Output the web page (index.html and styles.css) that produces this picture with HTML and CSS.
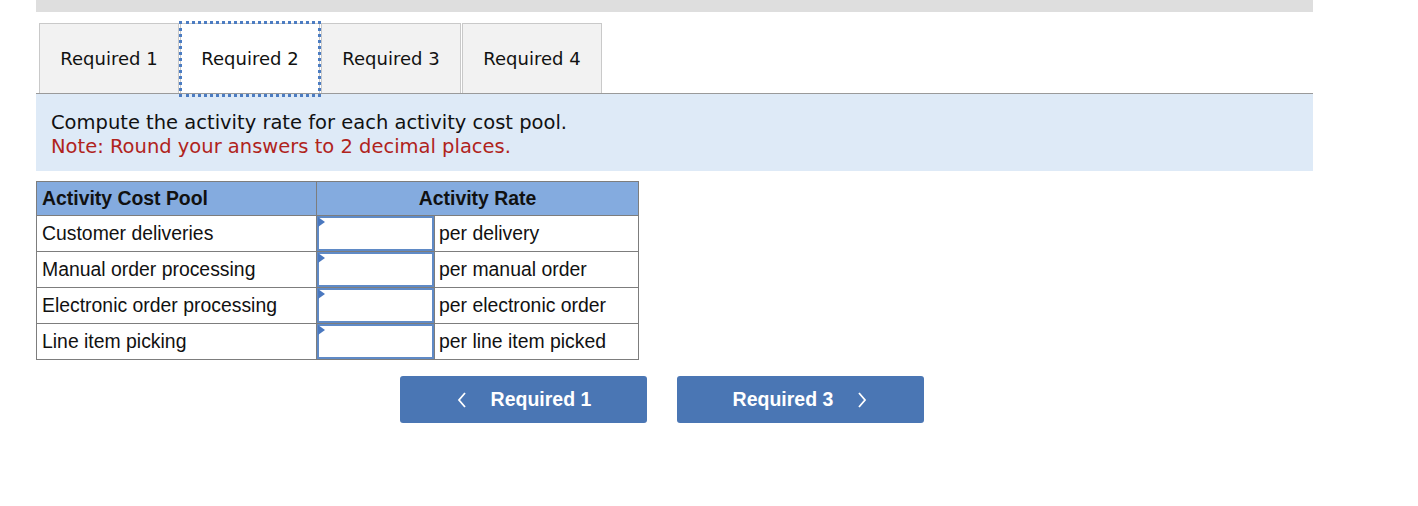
FILE: index.html
```html
<!DOCTYPE html>
<html>
<head>
<meta charset="utf-8">
<link rel="stylesheet" href="styles.css">
</head>
<body>
<div class="page">
  <div class="topbar"></div>
  <div class="tabs">
    <div class="tab">Required 1</div>
    <div class="tab active">Required 2</div>
    <div class="tab">Required 3</div>
    <div class="tab">Required 4</div>
  </div>
  <div class="panel">
    <div class="instr">Compute the activity rate for each activity cost pool.</div>
    <div class="note">Note: Round your answers to 2 decimal places.</div>
  </div>
  <table class="grid">
    <tr class="head">
      <th class="c1">Activity Cost Pool</th>
      <th class="c2" colspan="2">Activity Rate</th>
    </tr>
    <tr>
      <td class="c1">Customer deliveries</td>
      <td class="cin"><div class="inbox"><span class="tri"></span></div></td>
      <td class="cunit">per delivery</td>
    </tr>
    <tr>
      <td class="c1">Manual order processing</td>
      <td class="cin"><div class="inbox"><span class="tri"></span></div></td>
      <td class="cunit">per manual order</td>
    </tr>
    <tr>
      <td class="c1">Electronic order processing</td>
      <td class="cin"><div class="inbox"><span class="tri"></span></div></td>
      <td class="cunit">per electronic order</td>
    </tr>
    <tr>
      <td class="c1">Line item picking</td>
      <td class="cin"><div class="inbox"><span class="tri"></span></div></td>
      <td class="cunit">per line item picked</td>
    </tr>
  </table>
  <div class="navs">
    <button class="navbtn"><svg class="chev" width="12" height="18" viewBox="0 0 12 18"><polyline points="9,2 3,9 9,16" fill="none" stroke="#fff" stroke-width="1.8"/></svg><span>Required 1</span></button>
    <button class="navbtn"><span>Required 3</span><svg class="chev" width="12" height="18" viewBox="0 0 12 18"><polyline points="3,2 9,9 3,16" fill="none" stroke="#fff" stroke-width="1.8"/></svg></button>
  </div>
</div>
</body>
</html>
```
FILE: styles.css
```css
html, body { margin: 0; padding: 0; background: #fff; }
.page { margin-left: 36px; width: 1277px; }
.topbar { height: 12px; background: #dedede; }
.tabs {
  display: flex;
  gap: 1px;
  margin-top: 11px;
  padding-left: 3px;
  border-bottom: 1px solid #9a9a9a;
  font-family: "DejaVu Sans", Verdana, sans-serif;
  font-size: 18px;
  color: #111;
}
.tab {
  width: 138px;
  height: 69px;
  border: 1px solid #c9c9c9;
  border-bottom: none;
  background: #f2f2f2;
  display: flex;
  align-items: center;
  justify-content: center;
  position: relative;
}
.tab.active { background: #fff; }
.tab.active::after {
  content: "";
  position: absolute;
  left: -2px; right: -2px; top: -3px; bottom: -4px;
  border: 3px dotted #4b7cc2;
}
.panel {
  background: #deeaf7;
  height: 77px;
  box-sizing: border-box;
  padding: 17px 15px 0;
  font-family: "DejaVu Sans", Verdana, sans-serif;
  font-size: 19.5px;
  line-height: 24px;
  color: #111;
}
.note { color: #b0231c; }
.grid {
  margin-top: 10px;
  border-collapse: collapse;
  width: 603px;
  font-family: "Liberation Sans", Arial, sans-serif;
  font-size: 19.4px;
  color: #111;
}
.grid th, .grid td { border: 1px solid #7d7d7d; padding: 0; }
.grid .head th { background: #84abdf; height: 33px; font-weight: bold; }
.grid th.c1 { text-align: left; padding-left: 5px; width: 274px; }
.grid td { height: 35px; }
.grid td.c1 { padding-left: 5px; }
.grid td.cin { width: 117px; padding: 0; }
.grid td.cunit { padding-left: 4px; border-left: none; }
.inbox {
  height: 35px;
  box-sizing: border-box;
  border: 2px solid #5f8ac6;
  background: #fff;
  position: relative;
}
.tri {
  position: absolute;
  left: -1px; top: -1px;
  width: 0; height: 0;
  border-top: 5px solid transparent;
  border-bottom: 5px solid transparent;
  border-left: 7px solid #4a78bf;
}
.navs {
  display: flex;
  gap: 30px;
  margin-top: 16px;
  margin-left: 364px;
}
.navbtn {
  width: 247px;
  height: 47px;
  background: #4a76b4;
  border: none;
  border-radius: 3px;
  color: #fff;
  font-family: "Liberation Sans", Arial, sans-serif;
  font-weight: bold;
  font-size: 19.5px;
  display: flex;
  align-items: center;
  justify-content: center;
  gap: 23px;
  padding: 0;
}
.chev { display: block; }
```
